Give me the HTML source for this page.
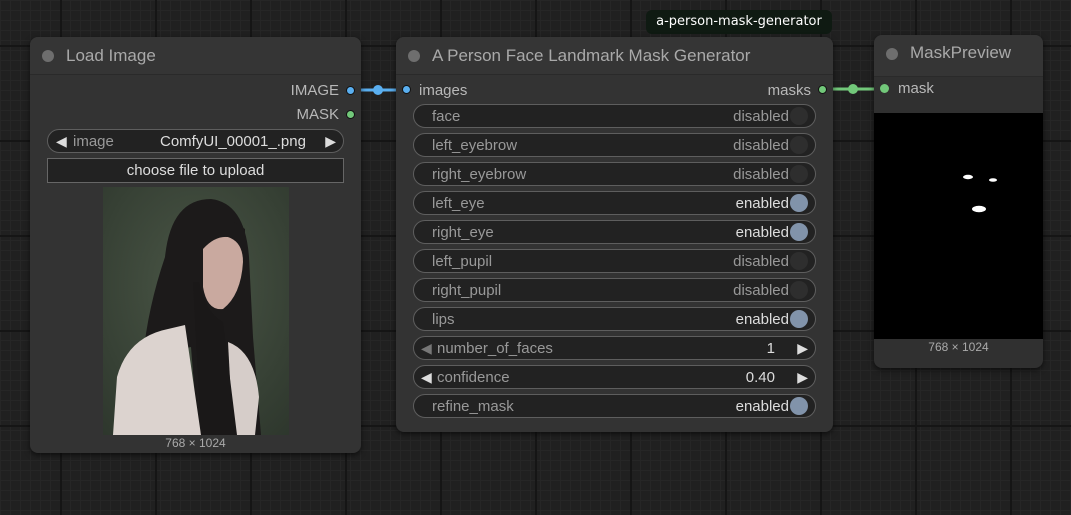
<!DOCTYPE html>
<html><head><meta charset="utf-8"><style>
*{box-sizing:border-box;margin:0;padding:0}
body{width:1071px;height:515px;overflow:hidden;background:#202020;font-family:"Liberation Sans",Arial,sans-serif;position:relative;
background-image:linear-gradient(#151515 2px,transparent 2px),linear-gradient(90deg,#151515 2px,transparent 2px),linear-gradient(#262626 1px,transparent 1px),linear-gradient(90deg,#262626 1px,transparent 1px);
background-size:95px 95px,95px 95px,10px 10px,10px 10px;background-position:-35px 45px,-35px 45px,0 0,0 0}
.node{position:absolute;background:#333;border-radius:8px;box-shadow:0 2px 6px rgba(0,0,0,.6);overflow:hidden}
.title{height:38px;background:#353535;border-bottom:1px solid #2a2a2a;color:#a9a9a9;font-size:17px;line-height:38px;padding-left:36px;position:relative}
.title:before{content:"";position:absolute;left:12px;top:13px;width:12px;height:12px;border-radius:50%;background:#6e6e6e}
.abs{position:absolute}
.slot{position:absolute;width:9px;height:9px;border-radius:50%;border:1px solid #111}
.lbl{position:absolute;color:#b8b8b8;font-size:15px}
.w{position:absolute;left:17px;width:403px;height:24px;border:1px solid #5e5e5e;border-radius:12px;background:#222;font-size:15px;color:#999;line-height:23px}
.w .n{position:absolute;left:18px}
.w .v{position:absolute;right:26px;color:#999}
.w .v.on{color:#ddd}
.w .t{position:absolute;right:7px;top:2px;width:18px;height:18px;border-radius:50%;background:#2e2e2e}
.w .t.on{background:#8193aa}
.w .la{position:absolute;left:7px;color:#ddd;font-size:14px}
.w .ra{position:absolute;right:7px;color:#ddd;font-size:14px}
</style></head><body>

<svg class="abs" style="left:0;top:0" width="1071" height="515">
<line x1="355" y1="90" x2="407" y2="90" stroke="#5aaff0" stroke-width="3"/>
<circle cx="378" cy="90" r="5" fill="#5aaff0"/>
<line x1="826" y1="89" x2="885" y2="89" stroke="#72c87a" stroke-width="3"/>
<circle cx="853" cy="89" r="5" fill="#72c87a"/>
</svg>

<div class="node" style="left:30px;top:37px;width:331px;height:416px">
<div class="title">Load Image</div>
<div class="lbl" style="right:22px;top:45px">IMAGE</div>
<div class="slot" style="right:6px;top:49px;background:#5aaff0"></div>
<div class="lbl" style="right:22px;top:69px">MASK</div>
<div class="slot" style="right:6px;top:73px;background:#72c87a"></div>
<div class="w" style="left:17px;top:92px;width:297px;height:24px">
<span class="la" style="left:8px">◀</span><span class="n" style="left:25px;color:#999">image</span>
<span style="position:absolute;left:112px;color:#ddd">ComfyUI_00001_.png</span><span class="ra">▶</span></div>
<div class="abs" style="left:17px;top:121px;width:297px;height:25px;background:#222;border:1px solid #666;color:#ddd;font-size:15px;text-align:center;line-height:23px">choose file to upload</div>
<svg class="abs" style="left:73px;top:150px" width="186" height="248" viewBox="0 0 186 248">
<defs><radialGradient id="bg" cx=".5" cy=".4" r=".8"><stop offset="0" stop-color="#4a5646"/><stop offset="1" stop-color="#2d362c"/></radialGradient></defs>
<rect width="186" height="248" fill="url(#bg)"/>
<path d="M62 70 Q68 12 108 12 Q142 16 146 70 L150 150 L158 248 L95 248 L88 160 L40 170 Q45 120 62 70Z" fill="#1c1a1a"/>
<path d="M10 248 L14 190 Q25 150 65 142 L82 138 L98 248Z" fill="#dcd3cf"/>
<path d="M125 155 Q152 165 156 210 L152 248 L130 248Z" fill="#d6cdc9"/>
<path d="M100 58 Q108 48 125 50 Q140 55 140 75 Q138 108 120 122 Q104 124 100 100Z" fill="#c9a99f"/>
<path d="M95 40 Q115 22 142 42 L142 58 Q120 40 100 62Z" fill="#1c1a1a"/>
<path d="M90 95 L98 248 L134 248 L120 135 Q102 125 96 95Z" fill="#1a1818"/>
</svg>
<div class="abs" style="left:0;width:331px;top:399px;text-align:center;color:#aaa;font-size:12px">768 × 1024</div>
</div>

<div class="abs" style="left:646px;top:10px;width:186px;height:24px;background:#0f1a12;border-radius:6px;color:#fff;text-align:center;line-height:24px;font-family:'DejaVu Sans','Liberation Sans',sans-serif;font-size:13px">a-person-mask-generator</div>

<div class="node" style="left:396px;top:37px;width:437px;height:395px">
<div class="title">A Person Face Landmark Mask Generator</div>
<div class="slot" style="left:6px;top:48px;background:#5aaff0"></div>
<div class="lbl" style="left:23px;top:45px">images</div>
<div class="lbl" style="right:22px;top:45px">masks</div>
<div class="slot" style="right:6px;top:48px;background:#72c87a"></div>
<div class="w" style="top:67px"><span class="n">face</span><span class="v">disabled</span><span class="t"></span></div>
<div class="w" style="top:96px"><span class="n">left_eyebrow</span><span class="v">disabled</span><span class="t"></span></div>
<div class="w" style="top:125px"><span class="n">right_eyebrow</span><span class="v">disabled</span><span class="t"></span></div>
<div class="w" style="top:154px"><span class="n">left_eye</span><span class="v on">enabled</span><span class="t on"></span></div>
<div class="w" style="top:183px"><span class="n">right_eye</span><span class="v on">enabled</span><span class="t on"></span></div>
<div class="w" style="top:212px"><span class="n">left_pupil</span><span class="v">disabled</span><span class="t"></span></div>
<div class="w" style="top:241px"><span class="n">right_pupil</span><span class="v">disabled</span><span class="t"></span></div>
<div class="w" style="top:270px"><span class="n">lips</span><span class="v on">enabled</span><span class="t on"></span></div>
<div class="w" style="top:299px"><span class="la" style="color:#777">◀</span><span class="n" style="left:23px">number_of_faces</span><span class="v on" style="right:40px">1</span><span class="ra">▶</span></div>
<div class="w" style="top:328px"><span class="la">◀</span><span class="n" style="left:23px">confidence</span><span class="v on" style="right:40px">0.40</span><span class="ra">▶</span></div>
<div class="w" style="top:357px"><span class="n">refine_mask</span><span class="v on">enabled</span><span class="t on"></span></div>
</div>

<div class="node" style="left:874px;top:35px;width:169px;height:333px;background:#303030">
<div class="title" style="height:42px;line-height:36px">MaskPreview</div>
<div class="slot" style="left:6px;top:49px;background:#72c87a;border:none"></div>
<div class="lbl" style="left:24px;top:45px">mask</div>
<div class="abs" style="left:0;top:78px;width:169px;height:226px;background:#000">
<svg width="169" height="226"><ellipse cx="94" cy="64" rx="5" ry="2.2" fill="#fff"/><ellipse cx="119" cy="67" rx="4" ry="1.8" fill="#fff"/><ellipse cx="105" cy="96" rx="7" ry="3.2" fill="#fff"/></svg>
</div>
<div class="abs" style="left:0;width:169px;top:305px;text-align:center;color:#aaa;font-size:12px">768 × 1024</div>
</div>
</body></html>
